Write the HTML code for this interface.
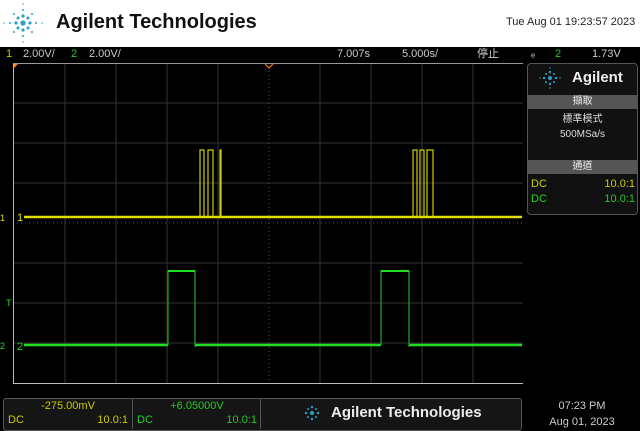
<!DOCTYPE html>
<html><head><meta charset="utf-8"><style>
body{margin:0;width:640px;height:431px;background:#000;overflow:hidden;position:relative;font-family:"Liberation Sans","Noto Sans CJK TC",sans-serif;}
.abs{position:absolute;}
.top{left:0;top:0;width:640px;height:47px;background:#fff;}
.n{font-family:"Liberation Sans Narrow","Liberation Sans",sans-serif;}
</style></head><body>
<div class="abs top"></div>
<svg class="abs" style="left:0;top:0" width="48" height="46" viewBox="0 0 48 46">
<g fill="#2aa0c8">
<circle cx="23" cy="23" r="2.6"/>
<circle cx="23" cy="16" r="1.6"/><circle cx="23" cy="30" r="1.6"/><circle cx="16" cy="23" r="1.6"/><circle cx="30" cy="23" r="1.6"/>
<circle cx="18" cy="18" r="1.5"/><circle cx="28" cy="28" r="1.5"/><circle cx="28" cy="18" r="1.5"/><circle cx="18" cy="28" r="1.5"/>
<circle cx="23" cy="10" r="1"/><circle cx="23" cy="36" r="1"/><circle cx="10" cy="23" r="1"/><circle cx="36" cy="23" r="1"/>
<circle cx="14" cy="14" r="1"/><circle cx="32" cy="32" r="1"/><circle cx="32" cy="14" r="1"/><circle cx="14" cy="32" r="1"/>
<circle cx="23" cy="4" r=".7"/><circle cx="23" cy="42" r=".7"/><circle cx="4" cy="23" r=".7"/><circle cx="42" cy="23" r=".7"/>
</g></svg>
<div class="abs" style="left:56px;top:11px;font-size:20px;font-weight:bold;color:#111;">Agilent Technologies</div>
<div class="abs n" style="left:506px;top:16px;font-size:11px;color:#222;">Tue Aug 01 19:23:57 2023</div>
<div class="abs n" style="left:0;top:47px;width:640px;height:14px;font-size:11px;color:#ccc;line-height:14px;">
<span class="abs" style="left:6px;color:#cc0">1</span><span class="abs" style="left:23px">2.00V/</span>
<span class="abs" style="left:71px;color:#2c2">2</span><span class="abs" style="left:89px">2.00V/</span>
<span class="abs" style="left:337px">7.007s</span><span class="abs" style="left:402px">5.000s/</span>
<span class="abs" style="left:477px">停止</span><span class="abs" style="left:531px">ₑ</span>
<span class="abs" style="left:555px;color:#2c2">2</span><span class="abs" style="left:592px">1.73V</span></div>
<svg class="abs" style="left:0;top:61px" width="527" height="330">
<g stroke="#333" stroke-width="1">
<path d="M65 2V322M116 2V322M167 2V322M218 2V322M320 2V322M371 2V322M422 2V322M473 2V322M13 42H523M13 82H523M13 122H523M13 202H523M13 242H523M13 282H523"/>
</g>
<path d="M269 2V322M13 162H523" stroke="#555" stroke-dasharray="1 3"/>
<path d="M13.5 2V322.5H523" stroke="#bbb" fill="none"/>
<path d="M13 2.5H523" stroke="#999"/>
<path d="M14 3l4 0l-4 4z" fill="#f80"/>
<path d="M265 3l4 4l4-4" stroke="#f80" fill="none"/>
<path d="M200 156V89H204V156M208 156V89H213V156M220 156V89H221V156M413 156V89H417V156M420 156V89H424V156M427 156V89H433V156" stroke="#cc0" stroke-width="1.2" fill="none"/>
<path d="M24 156H522" stroke="#dd0" stroke-width="2.5"/>
<path d="M24 284H168M195 284H381M409 284H522" stroke="#2d2" stroke-width="2.5"/>
<path d="M168 284V210H195V286M381 284V210H409V286" stroke="#2a2" stroke-width="1.2" fill="none"/>
<path d="M168 210H195M381 210H409" stroke="#2d2" stroke-width="2"/>
<text x="17" y="160" fill="#dd0" font-size="11">1</text>
<text x="17" y="289" fill="#2d2" font-size="11">2</text>
<text x="6" y="245" fill="#2d2" font-size="9">T</text>
<text x="0" y="160" fill="#dd0" font-size="9">1</text>
<text x="0" y="288" fill="#2d2" font-size="9">2</text>
</svg>
<div class="abs" style="left:527px;top:63px;width:109px;height:150px;border:1px solid #555;border-radius:4px;background:#111;"></div>
<svg class="abs" style="left:538px;top:66px" width="24" height="24"><g fill="#2aa0c8"><circle cx="12" cy="12" r="2"/><circle cx="12" cy="6" r="1.2"/><circle cx="12" cy="18" r="1.2"/><circle cx="6" cy="12" r="1.2"/><circle cx="18" cy="12" r="1.2"/><circle cx="8" cy="8" r="1"/><circle cx="16" cy="16" r="1"/><circle cx="16" cy="8" r="1"/><circle cx="8" cy="16" r="1"/><circle cx="12" cy="2" r=".7"/><circle cx="12" cy="22" r=".7"/><circle cx="2" cy="12" r=".7"/><circle cx="22" cy="12" r=".7"/></g></svg>
<div class="abs" style="left:572px;top:69px;font-size:15px;font-weight:bold;color:#eee;">Agilent</div>
<div class="abs" style="left:528px;top:95px;width:109px;height:14px;background:#555;color:#eee;font-size:10px;text-align:center;line-height:14px;">擷取</div>
<div class="abs n" style="left:528px;top:112px;width:109px;color:#ddd;font-size:10px;text-align:center;line-height:15px;">標準模式<br>500MSa/s</div>
<div class="abs" style="left:528px;top:160px;width:109px;height:14px;background:#555;color:#eee;font-size:10px;text-align:center;line-height:14px;">通道</div>
<div class="abs n" style="left:531px;top:177px;width:104px;font-size:11px;line-height:15px;"><div style="color:#cc0">DC<span style="float:right">10.0:1</span></div><div style="color:#2c2">DC<span style="float:right">10.0:1</span></div></div>
<div class="abs" style="left:3px;top:398px;width:517px;height:31px;border:1px solid #555;border-radius:3px;background:#151515;"></div>
<div class="abs" style="left:132px;top:399px;width:1px;height:30px;background:#555"></div>
<div class="abs" style="left:260px;top:399px;width:1px;height:30px;background:#555"></div>
<div class="abs n" style="left:8px;top:399px;width:120px;font-size:11px;color:#cc0;line-height:14px;"><div style="text-align:center">-275.00mV</div><div>DC<span style="float:right">10.0:1</span></div></div>
<div class="abs n" style="left:137px;top:399px;width:120px;font-size:11px;color:#2c2;line-height:14px;"><div style="text-align:center">+6.05000V</div><div>DC<span style="float:right">10.0:1</span></div></div>
<svg class="abs" style="left:300px;top:401px" width="24" height="24"><g fill="#2aa0c8"><circle cx="12" cy="12" r="2"/><circle cx="12" cy="6" r="1.2"/><circle cx="12" cy="18" r="1.2"/><circle cx="6" cy="12" r="1.2"/><circle cx="18" cy="12" r="1.2"/><circle cx="8" cy="8" r="1"/><circle cx="16" cy="16" r="1"/><circle cx="16" cy="8" r="1"/><circle cx="8" cy="16" r="1"/></g></svg>
<div class="abs" style="left:331px;top:404px;font-size:15px;font-weight:bold;color:#eee;">Agilent Technologies</div>
<div class="abs n" style="left:530px;top:398px;width:104px;font-size:11px;color:#ccc;text-align:center;line-height:16px;">07:23 PM<br>Aug 01, 2023</div>
</body></html>
